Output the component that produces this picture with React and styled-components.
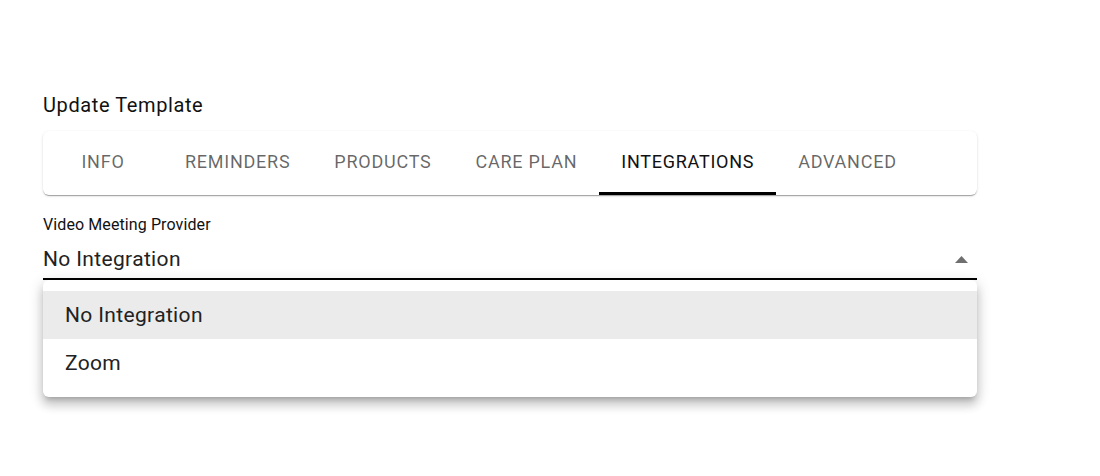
import styled, { createGlobalStyle } from "styled-components";

const GlobalStyle = createGlobalStyle`
    body{
        margin: 0;
        background-color: #fff;
        font-family: Roboto, "Liberation Sans", sans-serif;
        color: rgba(0, 0, 0, 0.87);
    }
`;

const Page = styled.div`
    box-sizing: border-box;
    min-height: 476px;
    padding: 91px 43px 0;
    width: 1020px;
    > *{
        width: 934px;
    }
`;

const Title = styled.h2`
    margin: 0;
    font-size: 20px;
    font-weight: 400;
    letter-spacing: 0.6px;
    line-height: 28px;
    color: #111;
`;

const TabBar = styled.div`
    margin-top: 12px;
    height: 64px;
    display: flex;
    background-color: #fff;
    border-radius: 6px;
    box-shadow: 0px 2px 1px -1px rgba(0,0,0,0.2), 0px 1px 1px 0px rgba(0,0,0,0.14), 0px 1px 3px 0px rgba(0,0,0,0.12);
`;

const Tab = styled.div`
    position: relative;
    min-width: 120px;
    padding: 0 22px 4px;
    box-sizing: border-box;
    display: flex;
    align-items: center;
    justify-content: center;
    font-size: 18px;
    letter-spacing: 0.75px;
    text-transform: uppercase;
    color: ${({ $active }) => ($active ? "#111" : "rgba(0, 0, 0, 0.6)")};
    cursor: pointer;
    &::after{
        content: "";
        display: ${({ $active }) => ($active ? "block" : "none")};
        position: absolute;
        left: 0;
        right: 0;
        bottom: 0;
        height: 3px;
        background-color: #000;
    }
`;

const Field = styled.div`
    position: relative;
    margin-top: 20px;
`;

const Label = styled.div`
    font-size: 16px;
    letter-spacing: 0.1px;
    line-height: 20px;
    color: #111;
`;

const SelectBox = styled.div`
    margin-top: 10px;
    display: flex;
    align-items: center;
    justify-content: space-between;
    padding-bottom: 5px;
    border-bottom: 2px solid #000;
    > span{
        font-size: 21px;
        letter-spacing: 0.35px;
        line-height: 28px;
        color: #222;
    }
    > svg{
        margin-right: 9px;
    }
`;

const Menu = styled.ul`
    position: absolute;
    z-index: 10;
    top: 100%;
    left: 0;
    right: 0;
    margin: 0;
    padding: 11px 0 10px;
    list-style: none;
    background-color: #fff;
    border-radius: 6px;
    box-shadow: 0px 5px 5px -3px rgba(0,0,0,0.2), 0px 8px 10px 1px rgba(0,0,0,0.14), 0px 3px 14px 2px rgba(0,0,0,0.12);
`;

const Item = styled.li`
    height: 48px;
    display: flex;
    align-items: center;
    padding-left: 22px;
    font-size: 21px;
    letter-spacing: 0.35px;
    color: #222;
    background-color: ${({ $selected }) => ($selected ? "#ebebeb" : "transparent")};
`;

const tabs = ["Info", "Reminders", "Products", "Care Plan", "Integrations", "Advanced"];

function App() {
    return (
        <>
            <GlobalStyle />
            <Page>
                <Title>Update Template</Title>
                <TabBar>
                    {tabs.map(t => (
                        <Tab key={t} $active={t === "Integrations"}>{t}</Tab>
                    ))}
                </TabBar>
                <Field>
                    <Label>Video Meeting Provider</Label>
                    <SelectBox>
                        <span>No Integration</span>
                        <svg width="13" height="7" viewBox="0 0 13 7">
                            <polygon points="0,7 6.5,0 13,7" fill="#6f6f6f" />
                        </svg>
                    </SelectBox>
                    <Menu>
                        <Item $selected>No Integration</Item>
                        <Item>Zoom</Item>
                    </Menu>
                </Field>
            </Page>
        </>
    );
}

export default App;
